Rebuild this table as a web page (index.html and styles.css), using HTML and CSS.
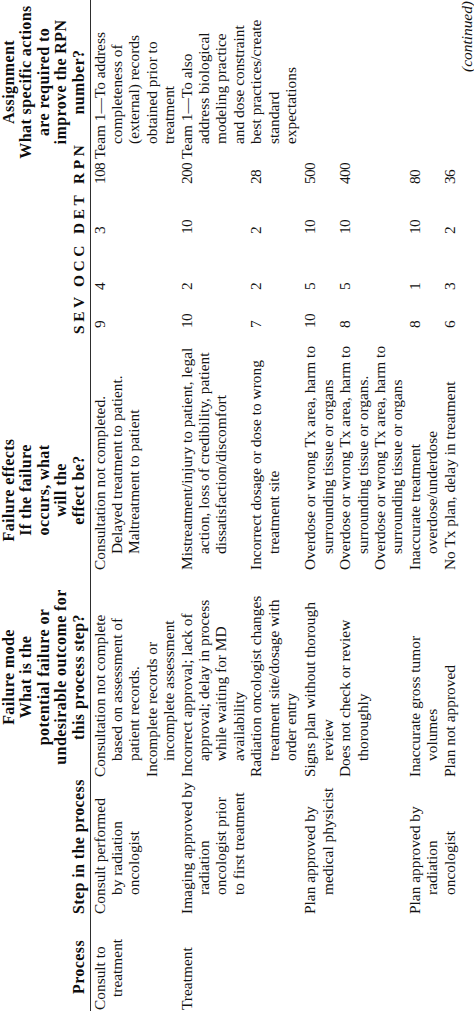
FILE: index.html
```html
<!DOCTYPE html>
<html lang="en">
<head>
<meta charset="utf-8">
<title>FMEA table</title>
<link rel="stylesheet" href="styles.css">
</head>
<body>
<div class="viewport">
  <div class="sheet">
    <table class="fmea">
      <colgroup>
        <col class="c-process">
        <col class="c-step">
        <col class="c-fm">
        <col class="c-fe">
        <col class="c-sev">
        <col class="c-occ">
        <col class="c-det">
        <col class="c-rpn">
        <col class="c-asg">
      </colgroup>
      <thead>
        <tr>
          <th class="h-process">Process</th>
          <th class="h-step">Step in the process</th>
          <th class="h-fm">Failure mode<br>What is the<br>potential failure or<br>undesirable outcome for<br>this process step?</th>
          <th class="h-fe">Failure effects<br>If the failure<br>occurs, what<br>will the<br>effect be?</th>
          <th class="h-num h-sev">SEV</th>
          <th class="h-num h-occ">OCC</th>
          <th class="h-num h-det">DET</th>
          <th class="h-num h-rpn">RPN</th>
          <th class="h-asg">Assignment<br>What specific actions<br>are required to<br>improve the RPN<br>number?</th>
        </tr>
      </thead>
      <tbody>
        <tr>
          <td class="process"><div class="p">Consult to<br>treatment</div></td>
          <td class="step"><div class="p">Consult performed<br>by radiation<br>oncologist</div></td>
          <td class="fm"><div class="p">Consultation not complete<br>based on assessment of<br>patient records.</div><div class="p">Incomplete records or<br>incomplete assessment</div></td>
          <td class="fe"><div class="p">Consultation not completed.<br>Delayed treatment to patient.<br>Maltreatment to patient</div></td>
          <td class="num sev">9</td>
          <td class="num occ">4</td>
          <td class="num det">3</td>
          <td class="num rpn">108</td>
          <td class="asg"><div class="p">Team 1—To address<br>completeness of<br>(external) records<br>obtained prior to<br>treatment</div></td>
        </tr>
        <tr>
          <td class="process" rowspan="6"><div class="p">Treatment</div></td>
          <td class="step" rowspan="2"><div class="p">Imaging approved by<br>radiation<br>oncologist prior<br>to first treatment</div></td>
          <td class="fm"><div class="p">Incorrect approval; lack of<br>approval; delay in process<br>while waiting for MD<br>availability</div></td>
          <td class="fe"><div class="p">Mistreatment/injury to patient, legal<br>action, loss of credibility, patient<br>dissatisfaction/discomfort</div></td>
          <td class="num sev">10</td>
          <td class="num occ">2</td>
          <td class="num det">10</td>
          <td class="num rpn">200</td>
          <td class="asg" rowspan="2"><div class="p">Team 1—To also<br>address biological<br>modeling practice<br>and dose constraint<br>best practices/create<br>standard<br>expectations</div></td>
        </tr>
        <tr>
          <td class="fm"><div class="p">Radiation oncologist changes<br>treatment site/dosage with<br>order entry</div></td>
          <td class="fe"><div class="p">Incorrect dosage or dose to wrong<br>treatment site</div></td>
          <td class="num sev">7</td>
          <td class="num occ">2</td>
          <td class="num det">2</td>
          <td class="num rpn">28</td>
        </tr>
        <tr class="group-start">
          <td class="step" rowspan="2"><div class="p">Plan approved by<br>medical physicist</div></td>
          <td class="fm"><div class="p">Signs plan without thorough<br>review</div></td>
          <td class="fe"><div class="p">Overdose or wrong Tx area, harm to<br>surrounding tissue or organs</div></td>
          <td class="num sev">10</td>
          <td class="num occ">5</td>
          <td class="num det">10</td>
          <td class="num rpn">500</td>
          <td class="asg" rowspan="4"></td>
        </tr>
        <tr>
          <td class="fm"><div class="p">Does not check or review<br>thoroughly</div></td>
          <td class="fe"><div class="p">Overdose or wrong Tx area, harm to<br>surrounding tissue or organs.</div><div class="p">Overdose or wrong Tx area, harm to<br>surrounding tissue or organs</div></td>
          <td class="num sev">8</td>
          <td class="num occ">5</td>
          <td class="num det">10</td>
          <td class="num rpn">400</td>
        </tr>
        <tr>
          <td class="step" rowspan="2"><div class="p">Plan approved by<br>radiation<br>oncologist</div></td>
          <td class="fm"><div class="p">Inaccurate gross tumor<br>volumes</div></td>
          <td class="fe"><div class="p">Inaccurate treatment<br>overdose/underdose</div></td>
          <td class="num sev">8</td>
          <td class="num occ">1</td>
          <td class="num det">10</td>
          <td class="num rpn">80</td>
        </tr>
        <tr>
          <td class="fm"><div class="p">Plan not approved</div></td>
          <td class="fe"><div class="p">No Tx plan, delay in treatment</div></td>
          <td class="num sev">6</td>
          <td class="num occ">3</td>
          <td class="num det">2</td>
          <td class="num rpn">36</td>
        </tr>
      </tbody>
    </table>
    <p class="continued">(continued)</p>
  </div>
</div>
</body>
</html>
```

FILE: styles.css
```css
html, body {
  margin: 0;
  padding: 0;
  background: #ffffff;
}

body {
  overflow: hidden;
}

.viewport {
  width: 474px;
  height: 1014px;
  overflow: hidden;
}

/* The printed table is laid out landscape (1014 x 474) and turned a quarter turn */
.sheet {
  width: 1014px;
  height: 474px;
  transform-origin: 0 0;
  transform: translateY(1014px) rotate(-90deg);
  font-family: "Liberation Serif", "Times New Roman", serif;
  font-size: 15.4px;
  line-height: 17.4px;
  color: #121212;
}

.fmea {
  table-layout: fixed;
  border-collapse: collapse;
  border-spacing: 0;
  width: 1014px;
  margin-top: -3px;
}

.c-process { width: 97px; }
.c-step { width: 137px; }
.c-fm { width: 207px; }
.c-fe { width: 240px; }
.c-sev { width: 40px; }
.c-occ { width: 56px; }
.c-det { width: 50px; }
.c-rpn { width: 22px; }
.c-asg { width: 165px; }

th, td {
  padding: 0;
  vertical-align: top;
  text-align: left;
  white-space: nowrap;
  overflow: visible;
  font-weight: normal;
}

thead th {
  vertical-align: bottom;
  text-align: center;
  font-weight: bold;
  font-size: 16px;
  letter-spacing: 0.4px;
  color: #0d0d0d;
  padding-bottom: 2.5px;
  border-bottom: 1.6px solid #2e2e2e;
}

.h-process { padding-right: 9px; }
.h-step { padding-right: 9px; }
.h-fm { padding-right: 7px; }
.h-fe { padding-right: 80px; }
.h-asg { padding-right: 5px; }

thead th.h-num {
  text-align: left;
  font-size: 15.4px;
  letter-spacing: 3.6px;
}

.h-sev { text-indent: -4px; }
.h-occ { text-indent: 3px; }

.p {
  padding-left: 16px;
  text-indent: -16px;
}

.process .p {
  padding-left: 14px;
  text-indent: -13px;
}

.step .p {
  padding-left: 19px;
  text-indent: -19px;
}

.asg {
  padding-left: 3px;
}

.asg .p {
  padding-left: 15px;
  text-indent: -15px;
}

.num {
  letter-spacing: -0.7px;
}

.num.sev { padding-left: 2px; }

.group-start td {
  padding-top: 2px;
}

.continued {
  margin: 0 4px 0 0;
  text-align: right;
  font-style: italic;
}
```
